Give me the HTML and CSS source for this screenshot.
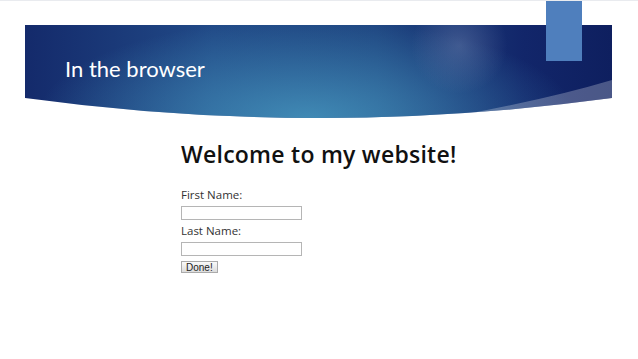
FILE: index.html
```html
<!DOCTYPE html>
<html lang="en">
<head>
    <meta charset="UTF-8">
    <title>In the browser</title>
    <link rel="stylesheet" href="styles.css">
</head>
<body>
    <div class="slide">
        <!-- title banner -->
        <div class="banner">
            <h1 class="slideTitle">In the browser</h1>
        </div>
        <div class="accent"></div>

        <!-- browser sample -->
        <div class="demo">
            <h2>Welcome to my website!</h2>
            <form class="nameForm">
                <label for="firstName">First Name:</label>
                <input type="text" id="firstName">
                <label for="lastName">Last Name:</label>
                <input type="text" id="lastName">
                <button type="button">Done!</button>
            </form>
        </div>
    </div>
</body>
</html>
```

FILE: styles.css
```css
body {
    margin: 0;
    background-color: #fff;
    font-family: 'Open Sans', sans-serif;
}

.slide {
    position: relative;
    height: 359px;
    border-top: 1px solid #e9ebef;
    padding-top: 24px;
    box-sizing: border-box;
}

.banner {
    position: relative;
    height: 94px;
    margin: 0 26px 0 25px;
    display: flex;
    align-items: center;
    clip-path: path('M0 0 H587 V73 Q293 113 0 73 Z');
    background:
        radial-gradient(circle 48px at 74% 22%, rgba(110, 130, 175, 0.45), rgba(110, 130, 175, 0)),
        radial-gradient(ellipse 270px 100px at 48% 100%, rgba(70, 150, 190, 0.85), rgba(70, 150, 190, 0)),
        linear-gradient(to right, #142a6b 0%, #214a87 32%, #1f4681 60%, #12266a 85%, #0e1f5f 100%);
}

.banner::after {
    content: "";
    position: absolute;
    inset: 0;
    background-color: rgba(255, 255, 255, 0.25);
    clip-path: path('M587 55 Q520 75 420 93 Q500 85 587 73 Z');
}

.slideTitle {
    margin: 0 0 0 40px;
    padding-bottom: 8px;
    font-family: 'Lato', sans-serif;
    font-weight: 400;
    font-size: 22px;
    color: #fff;
}

.accent {
    position: absolute;
    top: 0;
    left: 546px;
    width: 36px;
    height: 60px;
    background-color: #4f7fbd;
}

.demo {
    padding: 19px 0 0 181px;
}

.demo h2 {
    margin: 0 0 17px;
    font-size: 23px;
    font-weight: 600;
    letter-spacing: 0.25px;
    color: #111;
}

.nameForm {
    display: flex;
    flex-direction: column;
    align-items: flex-start;
    font-size: 11.5px;
    color: #333;
}

.nameForm input {
    width: 117px;
    height: 10px;
    margin: 4px 0 3px;
    border: 1px solid #b5b5b5;
    padding: 1px;
}

.nameForm button {
    margin-top: 2px;
    font-family: 'Liberation Sans', sans-serif;
    font-size: 10px;
    line-height: 9px;
    padding: 1px 4px 0;
    border: 1px solid #aaa;
    background: linear-gradient(#fafafa, #dcdcdc);
    color: #222;
}
```
